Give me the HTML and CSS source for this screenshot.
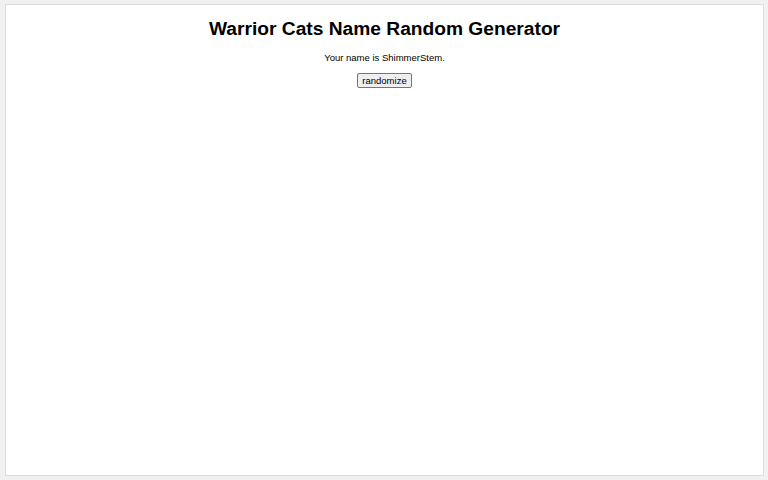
FILE: index.html
```html
<!DOCTYPE html>
<html>
<head>
<meta charset="utf-8">
<link rel="stylesheet" href="styles.css">
</head>
<body>
<div class="frame">
  <h1 class="title">Warrior Cats Name Random Generator</h1>
  <p class="name">Your name is ShimmerStem.</p>
  <button class="btn">randomize</button>
</div>
</body>
</html>
```
FILE: styles.css
```css
html, body {
  margin: 0;
  padding: 0;
  height: 100%;
}
body {
  background: #f1f1f1;
  padding: 4px 4px 4px 5px;
  box-sizing: border-box;
  font-family: "Liberation Sans", Arial, sans-serif;
}
.frame {
  background: #fff;
  border: 1px solid #dcdcdc;
  height: 100%;
  box-sizing: border-box;
  text-align: center;
  padding-top: 14px;
}
.title {
  margin: 0;
  font-size: 19.2px;
  font-weight: bold;
  color: #000;
  line-height: 19px;
}
.name {
  margin: 14px 0 0 0;
  font-size: 9.5px;
  line-height: 11px;
  color: #000;
}
.btn {
  display: inline-block;
  margin-top: 10px;
  font-family: "Liberation Sans", Arial, sans-serif;
  font-size: 9.5px;
  line-height: 10px;
  padding: 2px 4px 1px;
  background: #efefef;
  border: 1px solid #767676;
  border-radius: 2px;
  color: #000;
}
```
